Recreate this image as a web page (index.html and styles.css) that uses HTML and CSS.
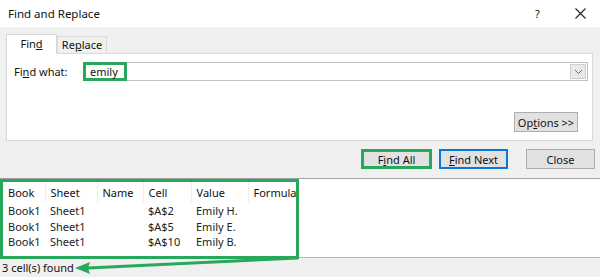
FILE: index.html
```html
<!DOCTYPE html>
<html lang="en">

<head>
    <meta charset="UTF-8">
    <title>Find and Replace</title>
    <link rel="stylesheet" href="styles.css">
</head>

<body>
    <div class="dialog">
        <div class="titlebar">
            <span class="title">Find and Replace</span>
            <span class="help">?</span>
            <span class="close-x">
                <svg width="11" height="11" viewBox="0 0 11 11"><path d="M0.5 0.5L10.5 10.5M10.5 0.5L0.5 10.5" stroke="#222" stroke-width="1.1" fill="none"/></svg>
            </span>
        </div>

        <div class="tabs">
            <div class="tab active">Fin<u>d</u></div>
            <div class="tab">Re<u>p</u>lace</div>
        </div>

        <div class="panel">
            <div class="find-row">
                <label>Fi<u>n</u>d what:</label>
                <div class="combo">
                    <span class="mark">emily</span>
                    <span class="drop">
                        <svg width="9" height="6" viewBox="0 0 9 6"><path d="M1 1L4.5 4.5L8 1" stroke="#666" stroke-width="1" fill="none"/></svg>
                    </span>
                </div>
            </div>
            <div class="options-row">
                <button class="btn options">Op<u>t</u>ions &gt;&gt;</button>
            </div>
        </div>

        <div class="actions">
            <button class="btn find-all">F<u>i</u>nd All</button>
            <button class="btn find-next"><u>F</u>ind Next</button>
            <button class="btn close">Close</button>
        </div>

        <div class="results">
            <div class="found">
                <table>
                    <thead>
                        <tr>
                            <th class="c-book">Book</th>
                            <th class="c-sheet">Sheet</th>
                            <th class="c-name">Name</th>
                            <th class="c-cell">Cell</th>
                            <th class="c-value">Value</th>
                            <th class="c-formula">Formula</th>
                        </tr>
                    </thead>
                    <tbody>
                        <tr><td>Book1</td><td>Sheet1</td><td></td><td>$A$2</td><td>Emily H.</td><td></td></tr>
                        <tr><td>Book1</td><td>Sheet1</td><td></td><td>$A$5</td><td>Emily E.</td><td></td></tr>
                        <tr><td>Book1</td><td>Sheet1</td><td></td><td>$A$10</td><td>Emily B.</td><td></td></tr>
                    </tbody>
                </table>
            </div>
        </div>

        <div class="status">3 cell(s) found</div>

        <!-- callout arrow from the results box to the status text -->
        <svg class="arrow" width="600" height="277" viewBox="0 0 600 277">
            <polygon points="298,256.5 298,259.5 88,269.5 88,266.5" fill="#27a85b"/>
            <polygon points="75,268 90,262 88,268 90,274" fill="#27a85b"/>
        </svg>
    </div>
</body>

</html>
```

FILE: styles.css
```css
* {
    box-sizing: border-box;
}

body {
    margin: 0;
    font-family: "Segoe UI", "Noto Sans", "Open Sans", sans-serif;
    font-size: 11px;
    color: #111;
}

.dialog {
    position: relative;
    width: 600px;
    height: 277px;
    background-color: #f0f0f0;
    overflow: hidden;
}

.titlebar {
    display: flex;
    align-items: center;
    height: 27px;
    padding-left: 8px;
    background-color: white;
}

.title {
    flex-grow: 1;
    font-size: 11.5px;
}

.help {
    width: 40px;
    font-size: 11px;
}

.close-x {
    display: flex;
    width: 25px;
}

.tabs {
    display: flex;
    align-items: flex-end;
    height: 26px;
    padding-left: 6px;
}

.tab {
    height: 17px;
    width: 50px;
    border: 1px solid #d9d9d9;
    border-bottom: none;
    background-color: #f0f0f0;
    text-align: center;
    line-height: 15px;
}

.tab.active {
    height: 20px;
    width: 51px;
    margin-bottom: -1px;
    background-color: white;
    position: relative;
    line-height: 18px;
}

.panel {
    height: 88px;
    margin: 0 7px 0 6px;
    padding: 8px 4px 0 7px;
    background-color: white;
    border: 1px solid #d9d9d9;
}

.find-row {
    display: flex;
    align-items: center;
}

.find-row label {
    width: 69px;
}

.combo {
    flex-grow: 1;
    display: flex;
    justify-content: space-between;
    height: 19px;
    border: 1px solid #c2c2c2;
}

.mark {
    display: flex;
    align-items: center;
    width: 44px;
    height: 19px;
    margin: -1px 0 0 -1px;
    padding-left: 4px;
    border: 3px solid #27a85b;
}

.drop {
    display: flex;
    align-items: center;
    justify-content: center;
    width: 16px;
    height: 15px;
    margin: 1px;
    background-color: #e9e9e9;
    border: 1px solid #cfcfcf;
}

.options-row {
    display: flex;
    justify-content: flex-end;
    padding: 31px 10px 0 0;
}

.btn {
    height: 20px;
    padding: 0;
    font-family: inherit;
    font-size: 11px;
    color: #111;
    background-color: #e1e1e1;
    border: 1px solid #adadad;
}

.options {
    width: 64px;
}

.actions {
    display: flex;
    justify-content: flex-end;
    padding: 8px 5px 0 0;
}

.find-all {
    width: 71px;
    border: 3px solid #27a85b;
}

.find-next {
    width: 69px;
    margin-left: 7px;
    border: 2px solid #0a78d7;
}

.close {
    width: 69px;
    margin-left: 18px;
}

.results {
    height: 80px;
    margin-top: 9px;
    background-color: white;
    border-top: 1px solid #a0a0a0;
    border-bottom: 1px solid #b4b4b4;
}

.found {
    width: 299px;
    height: 80px;
    border: 3px solid #27a85b;
}

table {
    border-collapse: collapse;
    table-layout: fixed;
    width: 100%;
}

th {
    height: 20px;
    padding: 0 0 0 5px;
    font-weight: normal;
    text-align: left;
    white-space: nowrap;
    border-right: 1px solid #ececec;
}

th.c-formula {
    border-right: none;
}

td {
    height: 15.5px;
    padding: 0 0 0 5px;
    line-height: 15.5px;
    white-space: nowrap;
    color: #222;
}

tbody tr:first-child td {
    padding-top: 1px;
}

.c-book { width: 42px; }
.c-sheet { width: 52px; }
.c-name { width: 46px; }
.c-cell { width: 48px; }
.c-value { width: 57px; }

.status {
    height: 19px;
    padding-left: 2px;
    line-height: 19px;
}

.arrow {
    position: absolute;
    top: 0;
    left: 0;
    pointer-events: none;
}
```
